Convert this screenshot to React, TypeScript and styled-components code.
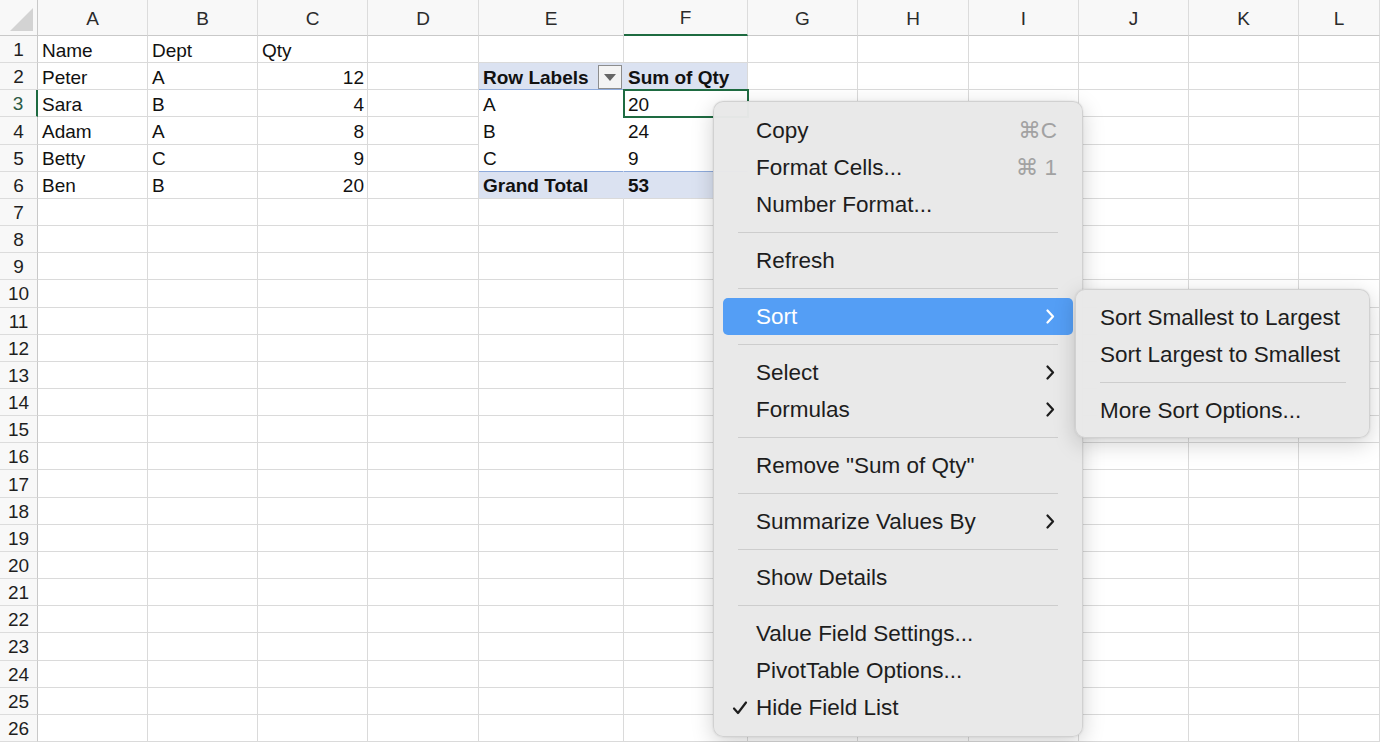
import React from 'react'
import styled, { createGlobalStyle } from 'styled-components'

const GlobalStyle = createGlobalStyle`
  html, body {
    margin: 0;
    padding: 0;
    background: #fff;
    overflow: hidden;
  }
  body {
    font-family: 'Liberation Sans', Arial, sans-serif;
    color: #111;
  }
`

const GREEN = '#1e6b41'
const GRID = '#dadada'
const PIVOT_FILL = '#dbe2f1'
const PIVOT_LINE = '#8eaadb'

const COLUMNS = ['A', 'B', 'C', 'D', 'E', 'F', 'G', 'H', 'I', 'J', 'K', 'L']
const ROW_COUNT = 26

type CellData = {
  text?: string
  align?: 'left' | 'right'
  bold?: boolean
  pivot?: 'head' | 'body' | 'bodyLast' | 'total'
  selected?: boolean
  dropdown?: boolean
}

// keyed by "F3" style address
const DATA: Record<string, CellData> = {
  A1: { text: 'Name' },
  B1: { text: 'Dept' },
  C1: { text: 'Qty' },
  A2: { text: 'Peter' },
  B2: { text: 'A' },
  C2: { text: '12', align: 'right' },
  A3: { text: 'Sara' },
  B3: { text: 'B' },
  C3: { text: '4', align: 'right' },
  A4: { text: 'Adam' },
  B4: { text: 'A' },
  C4: { text: '8', align: 'right' },
  A5: { text: 'Betty' },
  B5: { text: 'C' },
  C5: { text: '9', align: 'right' },
  A6: { text: 'Ben' },
  B6: { text: 'B' },
  C6: { text: '20', align: 'right' },
  E2: { text: 'Row Labels', bold: true, pivot: 'head', dropdown: true },
  F2: { text: 'Sum of Qty', bold: true, pivot: 'head' },
  E3: { text: 'A', pivot: 'body' },
  F3: { text: '20', pivot: 'body', selected: true },
  E4: { text: 'B', pivot: 'body' },
  F4: { text: '24', pivot: 'body' },
  E5: { text: 'C', pivot: 'bodyLast' },
  F5: { text: '9', pivot: 'bodyLast' },
  E6: { text: 'Grand Total', bold: true, pivot: 'total' },
  F6: { text: '53', bold: true, pivot: 'total' },
}

type MenuEntry =
  | 'sep'
  | { label: string; shortcut?: string; sub?: boolean; active?: boolean; checked?: boolean }

const MENU: MenuEntry[] = [
  { label: 'Copy', shortcut: '⌘C' },
  { label: 'Format Cells...', shortcut: '⌘ 1' },
  { label: 'Number Format...' },
  'sep',
  { label: 'Refresh' },
  'sep',
  { label: 'Sort', sub: true, active: true },
  'sep',
  { label: 'Select', sub: true },
  { label: 'Formulas', sub: true },
  'sep',
  { label: 'Remove "Sum of Qty"' },
  'sep',
  { label: 'Summarize Values By', sub: true },
  'sep',
  { label: 'Show Details' },
  'sep',
  { label: 'Value Field Settings...' },
  { label: 'PivotTable Options...' },
  { label: 'Hide Field List', checked: true },
]

const SUBMENU: MenuEntry[] = [
  { label: 'Sort Smallest to Largest' },
  { label: 'Sort Largest to Smallest' },
  'sep',
  { label: 'More Sort Options...' },
]

const Chevron = ({ color }: { color: string }) => (
  <svg width='9' height='15' viewBox='0 0 9 15'>
    <path d='M1.5 1.5 L7 7.5 L1.5 13.5' fill='none' stroke={color} strokeWidth='2.2' strokeLinecap='round' strokeLinejoin='round' />
  </svg>
)

const Check = () => (
  <svg width='16' height='16' viewBox='0 0 16 16'>
    <path d='M2 8.5 L6 13 L14 2.5' fill='none' stroke='#1d1d1d' strokeWidth='2.2' strokeLinecap='round' strokeLinejoin='round' />
  </svg>
)

const DropArrow = () => (
  <svg width='12' height='8' viewBox='0 0 12 8'>
    <path d='M0 0 H12 L6 7 Z' fill='#666' />
  </svg>
)

const renderMenu = (entries: MenuEntry[], Item: typeof MenuItem, Sep: typeof Separator) =>
  entries.map((e, i) =>
    e === 'sep' ? (
      <Sep key={i} />
    ) : (
      <Item key={i} $active={!!e.active}>
        {e.checked && (
          <CheckSlot>
            <Check />
          </CheckSlot>
        )}
        <span>{e.label}</span>
        {e.shortcut && <Shortcut>{e.shortcut}</Shortcut>}
        {e.sub && (
          <Arrow>
            <Chevron color={e.active ? '#fff' : '#1d1d1d'} />
          </Arrow>
        )}
      </Item>
    )
  )

const App = () => {
  const cells: React.ReactNode[] = []

  cells.push(
    <Corner key='corner'>
      <CornerMark />
    </Corner>
  )
  COLUMNS.forEach(c =>
    cells.push(
      <ColHead key={'h' + c} $active={c === 'F'}>
        {c}
      </ColHead>
    )
  )

  for (let r = 1; r <= ROW_COUNT; r++) {
    cells.push(
      <RowHead key={'r' + r} $active={r === 3}>
        {r}
      </RowHead>
    )
    COLUMNS.forEach(c => {
      const d = DATA[c + r] || {}
      cells.push(
        <Cell
          key={c + r}
          $align={d.align || 'left'}
          $bold={!!d.bold}
          $pivot={d.pivot}
          $first={c === 'E'}
          $selected={!!d.selected}
        >
          {d.text && <CellText>{d.text}</CellText>}
          {d.dropdown && (
            <FilterButton>
              <DropArrow />
            </FilterButton>
          )}
        </Cell>
      )
    })
  }

  return (
    <Page>
      <GlobalStyle />
      <Sheet>{cells}</Sheet>
      <ContextMenu>{renderMenu(MENU, MenuItem, Separator)}</ContextMenu>
      <SubMenu>{renderMenu(SUBMENU, SubItem, SubSeparator)}</SubMenu>
    </Page>
  )
}

export default App

const Page = styled.div`
  position: relative;
  width: 1380px;
  height: 742px;
  overflow: hidden;
  background: #fff;
`

const Sheet = styled.div`
  display: grid;
  grid-template-columns: 38px 110px 110px 110px 111px 145px 124px 110px 111px 110px 110px 110px 1fr;
  grid-template-rows: 36px repeat(${ROW_COUNT}, 1fr);
  width: 1380px;
  height: 742px;
  font-size: 19px;
`

const Corner = styled.div`
  background: #f8f8f8;
  border-right: 1px solid #c9c9c9;
  border-bottom: 1px solid #c9c9c9;
  display: flex;
  align-items: flex-end;
  justify-content: flex-end;
  padding: 0 4px 4px 0;
`

const CornerMark = styled.div`
  width: 23px;
  height: 23px;
  background: #d3d3d3;
  clip-path: polygon(100% 0, 100% 100%, 0 100%);
`

const ColHead = styled.div<{ $active: boolean }>`
  background: #f8f8f8;
  border-right: 1px solid #dcdcdc;
  border-bottom: ${({ $active }) => ($active ? `2px solid ${GREEN}` : '1px solid #c9c9c9')};
  display: flex;
  align-items: center;
  justify-content: center;
  color: #2b2b2b;
  padding-top: 2px;
`

const RowHead = styled.div<{ $active: boolean }>`
  background: #f8f8f8;
  border-right: ${({ $active }) => ($active ? `2px solid ${GREEN}` : '1px solid #c9c9c9')};
  border-bottom: 1px solid #dcdcdc;
  display: flex;
  align-items: center;
  justify-content: center;
  color: ${({ $active }) => ($active ? '#2d5a45' : '#1f1f1f')};
  padding-top: 2px;
`

const Cell = styled.div<{
  $align: 'left' | 'right'
  $bold: boolean
  $pivot?: 'head' | 'body' | 'bodyLast' | 'total'
  $first: boolean
  $selected: boolean
}>`
  position: relative;
  display: flex;
  align-items: center;
  justify-content: ${({ $align }) => ($align === 'right' ? 'flex-end' : 'flex-start')};
  padding: 2px 3px 0 4px;
  min-width: 0;
  overflow: visible;
  white-space: nowrap;
  font-weight: ${({ $bold }) => ($bold ? 700 : 400)};
  background: ${({ $pivot }) => ($pivot === 'head' || $pivot === 'total' ? PIVOT_FILL : '#fff')};
  border-right: 1px solid
    ${({ $pivot, $first }) =>
      !$pivot || !$first ? GRID : $pivot === 'head' || $pivot === 'total' ? PIVOT_FILL : '#fff'};
  border-bottom: 1px solid
    ${({ $pivot }) =>
      $pivot === 'head' || $pivot === 'bodyLast' ? PIVOT_LINE : $pivot === 'body' ? '#fff' : GRID};
  ${({ $selected }) =>
    $selected &&
    `
    z-index: 1;
    outline: 2px solid ${GREEN};
    outline-offset: -1px;
  `}
`

const CellText = styled.span`
  line-height: 1;
`

const FilterButton = styled.div`
  margin-left: auto;
  margin-right: -2px;
  width: 24px;
  height: 24px;
  box-sizing: border-box;
  border: 1px solid #8d8d8d;
  background: #f4f4f4;
  display: flex;
  align-items: center;
  justify-content: center;
  padding-top: 1px;
`

const ContextMenu = styled.div`
  position: absolute;
  left: 713px;
  top: 101px;
  width: 370px;
  box-sizing: border-box;
  padding: 10px 9px;
  background: rgba(233, 233, 233, 0.98);
  border: 1px solid rgba(0, 0, 0, 0.1);
  border-radius: 10px;
  box-shadow: 0 6px 22px rgba(0, 0, 0, 0.18), 0 0 2px rgba(0, 0, 0, 0.12);
  z-index: 10;
`

const SubMenu = styled(ContextMenu)`
  left: 1075px;
  top: 289px;
  width: 295px;
  padding: 9px 0 8px;
  z-index: 11;
`

const MenuItem = styled.div<{ $active: boolean }>`
  position: relative;
  height: 37px;
  display: flex;
  align-items: center;
  padding: 0 17px 0 33px;
  border-radius: 5px;
  font-size: 22.5px;
  color: ${({ $active }) => ($active ? '#fff' : '#1d1d1d')};
  background: ${({ $active }) => ($active ? '#549ef5' : 'transparent')};
  white-space: nowrap;
`

const SubItem = styled(MenuItem)`
  padding-left: 24px;
`

const CheckSlot = styled.span`
  position: absolute;
  left: 9px;
  top: 11px;
  display: flex;
`

const Shortcut = styled.span`
  margin-left: auto;
  color: #a2a2a2;
  font-family: 'Liberation Sans', 'DejaVu Sans', sans-serif;
  margin-right: -1px;
`

const Arrow = styled.span`
  margin-left: auto;
  display: flex;
  align-items: center;
  margin-right: 1px;
`

const Separator = styled.div`
  height: 19px;
  display: flex;
  align-items: center;
  margin: 0 15px;
  &::after {
    content: '';
    flex: 1;
    height: 1px;
    background: #cdcdcd;
  }
`

const SubSeparator = styled(Separator)`
  margin: 0 23px 0 24px;
`
